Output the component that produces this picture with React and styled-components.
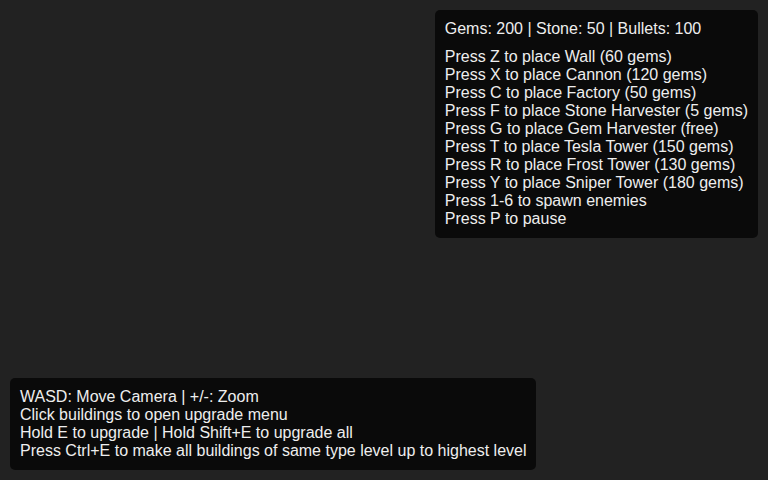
import styled, { createGlobalStyle } from 'styled-components'

const GlobalStyle = createGlobalStyle`
    html, body {
        margin: 0;
        padding: 0;
        background: #222;
        font-family: "Liberation Sans", Arial, sans-serif;
    }
`

const resources = { gems: 200, stone: 50, bullets: 100 }

const placements = [
    ['Z', 'Wall', '60 gems'],
    ['X', 'Cannon', '120 gems'],
    ['C', 'Factory', '50 gems'],
    ['F', 'Stone Harvester', '5 gems'],
    ['G', 'Gem Harvester', 'free'],
    ['T', 'Tesla Tower', '150 gems'],
    ['R', 'Frost Tower', '130 gems'],
    ['Y', 'Sniper Tower', '180 gems'],
]

const help = [
    'WASD: Move Camera | +/-: Zoom',
    'Click buildings to open upgrade menu',
    'Hold E to upgrade | Hold Shift+E to upgrade all',
    'Press Ctrl+E to make all buildings of same type level up to highest level',
]

const App = () => {
    return (
        <Game>
            <GlobalStyle />
            <Hud>
                <Resources>
                    Gems: {resources.gems} | Stone: {resources.stone} | Bullets: {resources.bullets}
                </Resources>
                {placements.map(([key, name, cost]) => (
                    <Line key={key}>Press {key} to place {name} ({cost})</Line>
                ))}
                <Line>Press 1-6 to spawn enemies</Line>
                <Line>Press P to pause</Line>
            </Hud>
            <Controls>
                {help.map(text => (
                    <Line key={text}>{text}</Line>
                ))}
            </Controls>
        </Game>
    )
}

const Game = styled.div`
    position: relative;
    width: 100vw;
    height: 100vh;
    overflow: hidden;
    background: #222;
`

const Panel = styled.div`
    position: absolute;
    background: rgba(0, 0, 0, 0.7);
    color: #eee;
    border-radius: 5px;
    padding: 10px;
    font-size: 16px;
    line-height: 18px;
    white-space: nowrap;
`

const Hud = styled(Panel)`
    top: 10px;
    right: 10px;
`

const Controls = styled(Panel)`
    left: 10px;
    bottom: 10px;
`

const Resources = styled.div`
    margin-bottom: 10px;
`

const Line = styled.div``

export default App
